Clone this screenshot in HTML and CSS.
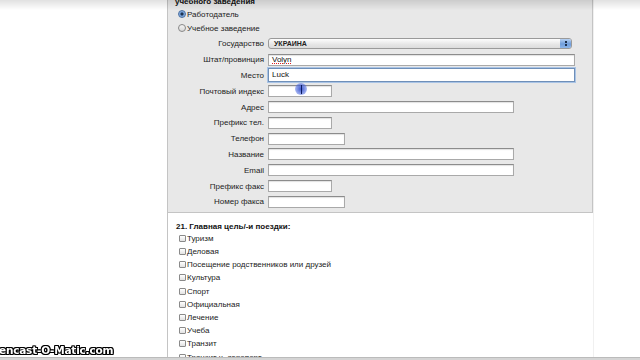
FILE: index.html
```html
<!DOCTYPE html>
<html lang="ru">
<head>
    <meta charset="UTF-8">
    <title>Анкета</title>
    <link rel="stylesheet" href="styles.css">
</head>
<body>
    <div class="page">
        <div class="gutter"></div>
        <div class="column">
            <div class="panel">
                <div class="subhead">учебного заведения</div>
                <label class="radio-row"><span class="radio checked"></span>Работодатель</label>
                <label class="radio-row"><span class="radio"></span>Учебное заведение</label>

                <div class="form">
                    <span class="lbl">Государство</span>
                    <div class="select"><span>УКРАИНА</span><span class="select-btn"><i></i><i></i></span></div>

                    <span class="lbl">Штат/провинция</span>
                    <div class="field full"><span class="spell">Volyn</span></div>

                    <span class="lbl">Место</span>
                    <div class="field full focus">Luck</div>

                    <span class="lbl">Почтовый индекс</span>
                    <div class="field short"></div>

                    <span class="lbl">Адрес</span>
                    <div class="field long"></div>

                    <span class="lbl">Префикс тел.</span>
                    <div class="field short"></div>

                    <span class="lbl">Телефон</span>
                    <div class="field medium"></div>

                    <span class="lbl">Название</span>
                    <div class="field long"></div>

                    <span class="lbl">Email</span>
                    <div class="field long"></div>

                    <span class="lbl">Префикс факс</span>
                    <div class="field short"></div>

                    <span class="lbl">Номер факса</span>
                    <div class="field medium"></div>
                </div>
            </div>

            <div class="section">
                <div class="section-title">21. Главная цель/-и поездки:</div>
                <label class="check-row"><span class="check"></span>Туризм</label>
                <label class="check-row"><span class="check"></span>Деловая</label>
                <label class="check-row"><span class="check"></span>Посещение родственников или друзей</label>
                <label class="check-row"><span class="check"></span>Культура</label>
                <label class="check-row"><span class="check"></span>Спорт</label>
                <label class="check-row"><span class="check"></span>Официальная</label>
                <label class="check-row"><span class="check"></span>Лечение</label>
                <label class="check-row"><span class="check"></span>Учеба</label>
                <label class="check-row"><span class="check"></span>Транзит</label>
                <label class="check-row"><span class="check"></span>Транзит ч. аэропорт</label>
            </div>
        </div>
    </div>

    <div class="top-shade"></div>
    <div class="bottom-bar"></div>
    <div class="pointer"><i></i></div>
    <div class="watermark">encast-O-Matic.com</div>
</body>
</html>
```

FILE: styles.css
```css
body {
    margin: 0;
    background: #fff;
    font-family: "Liberation Sans", Arial, sans-serif;
    font-size: 8px;
    color: #222;
    overflow: hidden;
}
.page {
    display: flex;
    height: 360px;
}
.gutter {
    width: 167px;
}
.column {
    width: 425px;
    border-left: 1px solid #c4c4c4;
    border-right: 1px solid #f0f0f0;
}
.panel {
    background: #e8e8e8;
    border-right: 1px solid #c4c4c4;
    border-bottom: 1px solid #c4c4c4;
    padding: 0 0 2px 0;
}
.subhead {
    font-weight: bold;
    font-size: 8px;
    line-height: 10px;
    margin-top: -3px;
    padding-left: 7px;
    color: #111;
}
.radio-row {
    display: flex;
    align-items: center;
    height: 14px;
    padding-left: 10px;
}
.radio {
    width: 6px;
    height: 6px;
    border: 1px solid #888;
    border-radius: 50%;
    background: linear-gradient(#f4f4f4, #d8d8d8);
    margin-right: 1px;
}
.radio.checked {
    border-color: #4a6fa0;
    background: radial-gradient(circle, #1e3350 0 1.3px, #6c9ad6 1.8px, #a8c6ee 100%);
}
.form {
    display: grid;
    grid-template-columns: 96px auto;
    grid-auto-rows: 15.8px;
    column-gap: 4px;
    align-items: center;
    justify-items: start;
    padding-top: 1px;
}
.lbl {
    justify-self: end;
    white-space: nowrap;
}
.field {
    box-sizing: border-box;
    height: 12px;
    background: #fff;
    border: 1px solid #a9a9a9;
    border-top-color: #8c8c8c;
    box-shadow: inset 0 1px 1px rgba(0, 0, 0, 0.12);
    padding-left: 3px;
    line-height: 10px;
    font-size: 8px;
    color: #111;
}
.field.full { width: 307px; }
.field.long { width: 246px; }
.field.medium { width: 77px; }
.field.short { width: 64px; }
.field.focus {
    height: 14px;
    line-height: 12px;
    border: 1px solid #6f8fb8;
    box-shadow: 0 0 0 1px #a9c4e6;
}
.spell {
    text-decoration: underline dotted #d22;
}
.select {
    box-sizing: border-box;
    width: 304px;
    height: 11px;
    display: flex;
    align-items: center;
    justify-content: space-between;
    border: 1px solid #9a9a9a;
    border-radius: 3px;
    background: linear-gradient(#fdfdfd, #e6e6e6 60%, #dcdcdc);
    padding-left: 5px;
    font-size: 7px;
    font-weight: bold;
    color: #222;
}
.select-btn {
    width: 11px;
    height: 9px;
    border-radius: 0 2px 2px 0;
    background: linear-gradient(#b8d2f2, #6f9ddb 55%, #8db6ea);
    display: flex;
    flex-direction: column;
    align-items: center;
    justify-content: center;
    gap: 1px;
}
.select-btn i {
    width: 2px;
    height: 2px;
    background: #1b2f4d;
}
.section {
    padding: 9px 0 0 8px;
}
.section-title {
    font-weight: bold;
    line-height: 10px;
    color: #111;
}
.check-row {
    display: flex;
    align-items: center;
    height: 13.2px;
    padding-left: 3px;
}
.check {
    box-sizing: border-box;
    width: 7px;
    height: 7px;
    border: 1px solid #8a8a8a;
    border-radius: 1px;
    background: linear-gradient(#fff, #e2e2e2);
    margin-right: 1px;
}
.top-shade {
    position: fixed;
    left: 0;
    top: 0;
    width: 100%;
    height: 10px;
    background: linear-gradient(rgba(0, 0, 0, 0.12), rgba(0, 0, 0, 0));
    pointer-events: none;
}
.bottom-bar {
    position: fixed;
    left: 0;
    bottom: 0;
    width: 100%;
    height: 2px;
    background: #d4d4d4;
    border-top: 1px solid #bbb;
}
.pointer {
    position: fixed;
    left: 295px;
    top: 83px;
    width: 12px;
    height: 12px;
    border-radius: 50%;
    background: radial-gradient(circle, rgba(40, 70, 200, 0.9), rgba(80, 110, 230, 0.5) 70%, rgba(80, 110, 230, 0));
    display: flex;
    justify-content: center;
    align-items: center;
}
.pointer i {
    width: 1px;
    height: 9px;
    background: #0b1a60;
}
.watermark {
    position: fixed;
    left: -1px;
    bottom: 4px;
    font-family: "DejaVu Sans", sans-serif;
    font-weight: bold;
    font-size: 10.5px;
    letter-spacing: -0.2px;
    color: #fff;
    text-shadow: -1px -1px 0 #000, 1px -1px 0 #000, -1px 1px 0 #000, 1px 1px 0 #000, 0 1px 0 #000, 0 -1px 0 #000, 1px 0 0 #000, -1px 0 0 #000;
}
```
